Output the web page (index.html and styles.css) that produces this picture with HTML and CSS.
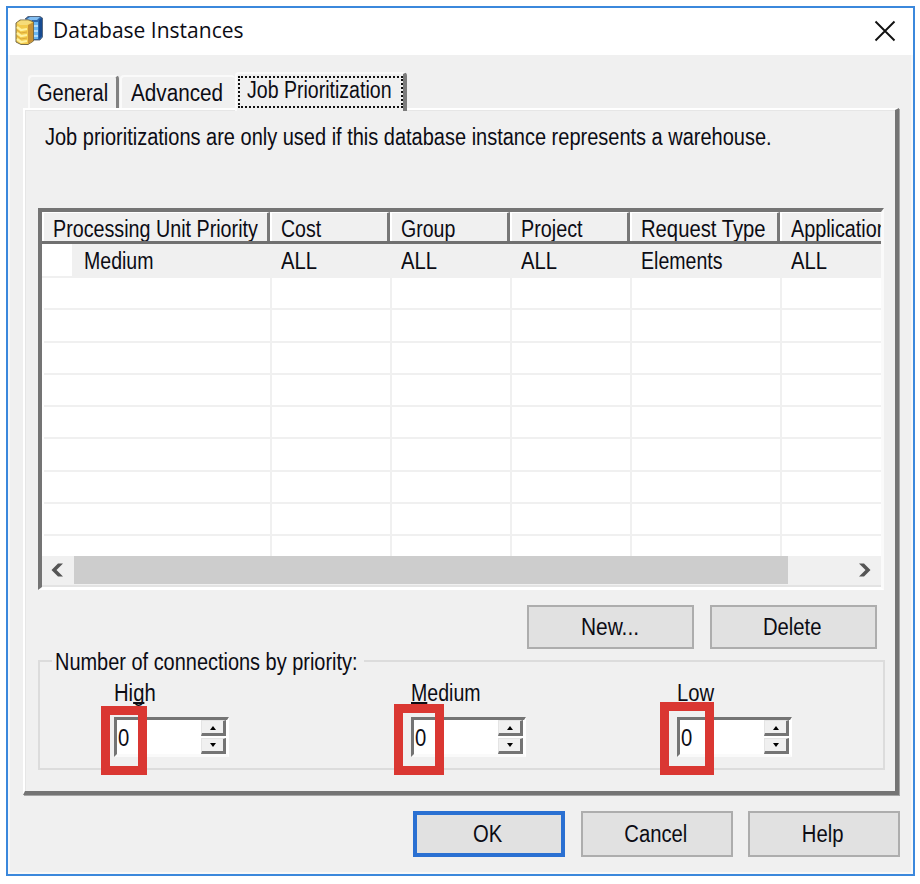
FILE: index.html
```html
<!DOCTYPE html>
<html lang="en">
<head>
<meta charset="utf-8">
<title>Database Instances</title>
<link rel="stylesheet" href="styles.css">
</head>
<body>
<main class="window">
  <header class="titlebar">
    <svg class="app-icon" width="30" height="32" viewBox="0 0 30 32">
      <path d="M10 4 13 1.5H25L27.5 3V22L25 25H17V5Z" fill="#2d68ae" stroke="#48556a" stroke-width=".8"/>
      <path d="M12 4 15 2H25L22 5H13Z" fill="#83bff2"/>
      <path d="M18 7H23V24H18Z" fill="#69b6f2"/>
      <path d="M24 5 27 3V21L24 24Z" fill="#174b91"/>
      <path d="M18 11H23M18 16H23M18 21H23" stroke="#cbe9ff" stroke-width="1.3"/>
      <path d="M1 8 5 5H14L18.5 7V26L13 29.5H6L1 27Z" fill="#f3ca4c" stroke="#756b4b" stroke-width="1"/>
      <path d="M13 10 18 7.5V26L13 29Z" fill="#c89236"/>
      <path d="M2 8 6 5.5H13L17 7.5 12 10H5Z" fill="#f6dc79"/>
      <path d="M2 12 6 15 12 14M2 18 6 21 12 20M2 24 6 27 12 26" fill="none" stroke="#fff2a0" stroke-width="2.2"/>
      <path d="M2 15 6 18 12 17M2 21 6 24 12 23" fill="none" stroke="#dca93a" stroke-width="1"/>
    </svg>
    <h1 class="title">Database Instances</h1>
    <svg class="close" width="22" height="22" viewBox="0 0 22 22"><path d="M1.5 1.5 20.5 20.5M20.5 1.5 1.5 20.5" stroke="#111" stroke-width="1.9"/></svg>
  </header>
  <nav class="tabs">
    <div class="tab tab-general"><span class="t s-general">General</span></div>
    <div class="tab tab-advanced"><span class="t s-advanced">Advanced</span></div>
    <div class="tab tab-active"><div class="focus"><span class="t s-job">Job Prioritization</span></div></div>
  </nav>
  <section class="panel">
    <p class="intro"><span class="t s-intro">Job prioritizations are only used if this database instance represents a warehouse.</span></p>
    <div class="list">
      <div class="list-head">
        <div class="th"><span class="t s-ppu">Processing Unit Priority</span></div>
        <div class="th"><span class="t s-cost">Cost</span></div>
        <div class="th"><span class="t s-group">Group</span></div>
        <div class="th"><span class="t s-project">Project</span></div>
        <div class="th"><span class="t s-request">Request Type</span></div>
        <div class="th"><span class="t s-app">Application</span></div>
      </div>
      <div class="list-body">
        <div class="row selected">
          <div class="td first"><span class="t s-medium">Medium</span></div>
          <div class="td"><span class="t s-all">ALL</span></div>
          <div class="td"><span class="t s-all">ALL</span></div>
          <div class="td"><span class="t s-all">ALL</span></div>
          <div class="td"><span class="t s-elements">Elements</span></div>
          <div class="td"><span class="t s-all">ALL</span></div>
        </div>
        <div class="row"><i></i><i></i><i></i><i></i><i></i><i></i></div>
        <div class="row"><i></i><i></i><i></i><i></i><i></i><i></i></div>
        <div class="row"><i></i><i></i><i></i><i></i><i></i><i></i></div>
        <div class="row"><i></i><i></i><i></i><i></i><i></i><i></i></div>
        <div class="row"><i></i><i></i><i></i><i></i><i></i><i></i></div>
        <div class="row"><i></i><i></i><i></i><i></i><i></i><i></i></div>
        <div class="row"><i></i><i></i><i></i><i></i><i></i><i></i></div>
        <div class="row"><i></i><i></i><i></i><i></i><i></i><i></i></div>
        <div class="row last"><i></i><i></i><i></i><i></i><i></i><i></i></div>
      </div>
      <div class="scroll">
        <svg width="33" height="28" viewBox="0 0 33 28"><path d="M21 7.5 14.5 14 21 20.5H16L9.5 14 16 7.5Z" fill="#555"/></svg>
        <div class="thumb"></div>
        <svg class="right" width="33" height="28" viewBox="0 0 33 28"><path d="M11 7.5 17.5 14 11 20.5H16L22.5 14 16 7.5Z" fill="#555"/></svg>
      </div>
    </div>
    <div class="list-actions">
      <button class="btn wide"><span class="t c s-new">New...</span></button>
      <button class="btn wide"><span class="t c s-delete">Delete</span></button>
    </div>
    <div class="group">
      <div class="legend"><span class="t s-legend">Number of connections by priority:</span></div>
      <div class="fields">
        <div class="field">
          <label class="t s-high">Hi<span class="key">g</span>h</label>
          <div class="spin"><span class="t s-zero">0</span>
            <div class="arrows"><b><svg width="8" height="5"><path d="M1 5 4 1 7 5Z"/></svg></b><b><svg width="8" height="5"><path d="M1 0 4 4 7 0Z"/></svg></b></div>
            <div class="mark mark-high"></div></div>
        </div>
        <div class="field">
          <label class="t s-medium"><span class="key">M</span>edium</label>
          <div class="spin"><span class="t s-zero">0</span>
            <div class="arrows"><b><svg width="8" height="5"><path d="M1 5 4 1 7 5Z"/></svg></b><b><svg width="8" height="5"><path d="M1 0 4 4 7 0Z"/></svg></b></div>
            <div class="mark mark-medium"></div></div>
        </div>
        <div class="field">
          <label class="t s-low">Low</label>
          <div class="spin"><span class="t s-zero">0</span>
            <div class="arrows"><b><svg width="8" height="5"><path d="M1 5 4 1 7 5Z"/></svg></b><b><svg width="8" height="5"><path d="M1 0 4 4 7 0Z"/></svg></b></div>
            <div class="mark mark-low"></div></div>
        </div>
      </div>
    </div>
  </section>
  <footer class="footer">
    <button class="btn default"><span class="t c s-ok">OK</span></button>
    <button class="btn"><span class="t c s-cancel">Cancel</span></button>
    <button class="btn"><span class="t c s-help">Help</span></button>
  </footer>
</main>
</body>
</html>
```
FILE: styles.css
```css
* { box-sizing: border-box; }
body { margin: 0; padding: 6px; background: #fff; color: #0c0c14; font-family: "Liberation Sans", Arial, sans-serif; font-size: 23px; }
.window { width: 909px; height: 870px; border: 2px solid #3b88dc; background: #f0f0f0; box-shadow: inset 0 0 0 2px #f8f8f8; }
.titlebar { height: 47px; background: #fff; display: flex; align-items: center; padding: 0 17px 0 7px; }
.app-icon { display: block; margin-top: -2px; }
.title { margin: -3px auto 0 8px; font: 400 21.5px/30px "Open Sans", "Noto Sans", sans-serif; white-space: nowrap; transform-origin: 0 50%; transform: scaleX(.977); }
.close { display: block; margin-top: -2px; }

/* Condensed dialog text */
.t { display: inline-block; white-space: nowrap; line-height: 26px; transform-origin: 0 50%; transform: scaleX(.88); }
.c { transform-origin: 50% 50%; }
.s-general { transform: scaleX(.87); }
.s-advanced { transform: scaleX(.9); }
.s-job { transform: scaleX(.85); }
.s-intro { transform: scaleX(.869); }
.s-ppu { transform: scaleX(.857); }
.s-legend { transform: scaleX(.867); }
.s-cost { transform: scaleX(.85); }
.s-group { transform: scaleX(.85); }
.s-project { transform: scaleX(.86); }
.s-app { transform: scaleX(.86); }
.s-new { transform: scaleX(.91); }
.s-medium, .s-elements { transform: scaleX(.85); }

.tabs { height: 53px; padding: 17px 0 0 20px; display: flex; align-items: flex-end; }
.tab { height: 33px; border-top: 2px solid #fafafa; border-left: 2px solid #fafafa; border-radius: 4px 4px 0 0; }
.tab-general { width: 91px; border-right: 3px solid #808080; padding: 3px 0 0 7px; }
.tab-advanced { width: 115px; margin-left: 1px; padding: 3px 0 0 9px; }
.tab-active { width: 172px; height: 39px; margin-bottom: -3px; border-right: 4px solid #7c7c7c; position: relative; background: #f0f0f0; padding: 2px 0 0 1px; }
.focus { width: 165px; height: 32px; border: 2px dotted #111; padding-left: 7px; line-height: 0; }
.focus .t { margin-top: -1px; }

.panel { width: 876px; height: 687px; margin-left: 15px; border: 2px solid #fff; border-right: 4px solid #747474; border-bottom: 4px solid #747474; box-shadow: 1px 1px #a5a5a5, inset 1px 1px #e6e6e6; padding: 0 10px 0 14px; }
.intro { margin: 0; padding: 14px 0 0 6px; height: 98px; }
.list { width: 846px; height: 382px; margin-left: -1px; border: solid #747474; border-width: 4px 0 0 4px; display: flex; flex-direction: column; overflow: hidden; border-right: 3px solid #fafafa; border-bottom: 3px solid #fff; }
.list-head, .row { display: grid; grid-template-columns: 228px 120px 120px 120px 150px 1fr; }
.list-head { height: 32px; border-bottom: 3px solid #707070; overflow: hidden; }
.th { height: 29px; min-width: 0; border: solid #fff; border-width: 1px 3px 0 2px; border-right-color: #777; padding: 3px 0 0 9px; }
.th:last-child { border-right: 0; }
.list-body { background: #fff; height: 312px; overflow: hidden; }
.row { height: 32.3px; }
.row i, .td { border-right: 2px solid #f0f0f0; border-bottom: 2px solid #f0f0f0; }
.row i { position: relative; left: 2px; }
.row i:last-child, .td:last-child { border-right: 0; }
.td { padding: 4px 0 0 11px; background: #f0f0f0; }
.td.first { background: linear-gradient(#fff, #fff) 0 0 / 30px 100% no-repeat #f0f0f0; padding-left: 42px; }
.selected { height: 34px; }
.scroll { height: 31px; padding-bottom: 3px; background: #f0f0f0; display: flex; border-bottom: 2px solid #e3e3e3; }
.scroll svg { display: block; margin-right: -1px; }
.thumb { width: 714px; height: 28px; background: #cdcdcd; }
.scroll .right { margin: 0 0 0 auto; }

.list-actions { display: flex; justify-content: flex-end; gap: 16px; margin: 15px 8px 0 0; }
.btn { width: 152px; height: 46px; margin: 0; padding: 0; border: 2px solid #adadad; background: #e1e1e1; color: inherit; font: inherit; }
.btn .t { position: relative; left: -1px; }
.btn.wide { width: 167px; height: 44px; }
.btn.default { border: 4px solid #2a70d2; }
.group { width: 847px; height: 110px; margin: 11px 0 0 -1px; border: 2px solid #dcdcdc; }
.legend { width: 312px; height: 26px; margin: -13px 0 0 12px; padding-left: 3px; background: #f0f0f0; }
.fields { display: grid; grid-template-columns: 297px 266px 1fr; padding: 5px 0 0 74px; }
.field { display: flex; flex-direction: column; align-items: flex-start; }
.key { text-decoration: underline; text-decoration-thickness: 2px; text-underline-offset: 1px; text-decoration-skip-ink: none; }
.spin { position: relative; width: 115px; height: 40px; margin-top: 11px; background: #fff; border: 3px solid #747474; border-right: 2px solid #fff; border-bottom: 3px solid #fafafa; display: flex; justify-content: space-between; padding-left: 1px; }
.spin .t { margin-top: 5px; }
.arrows { width: 26px; display: grid; gap: 2px; align-content: start; }
.arrows b { width: 25px; height: 16px; display: flex; align-items: center; justify-content: center; background: #f0f0f0; border: 1px solid #e4e4e4; border-right: 3px solid #747474; border-bottom: 3px solid #747474; }
.arrows svg { display: block; }
.mark { position: absolute; border: 9px solid #da3732; }
.mark-high { left: -16px; top: -14px; width: 46px; height: 69px; }
.mark-medium { left: -20px; top: -16px; width: 50px; height: 71px; }
.mark-low { left: -20px; top: -18px; width: 54px; height: 73px; }
.footer { display: flex; justify-content: flex-end; gap: 15.5px; padding: 16px 13px 0 0; }
```
